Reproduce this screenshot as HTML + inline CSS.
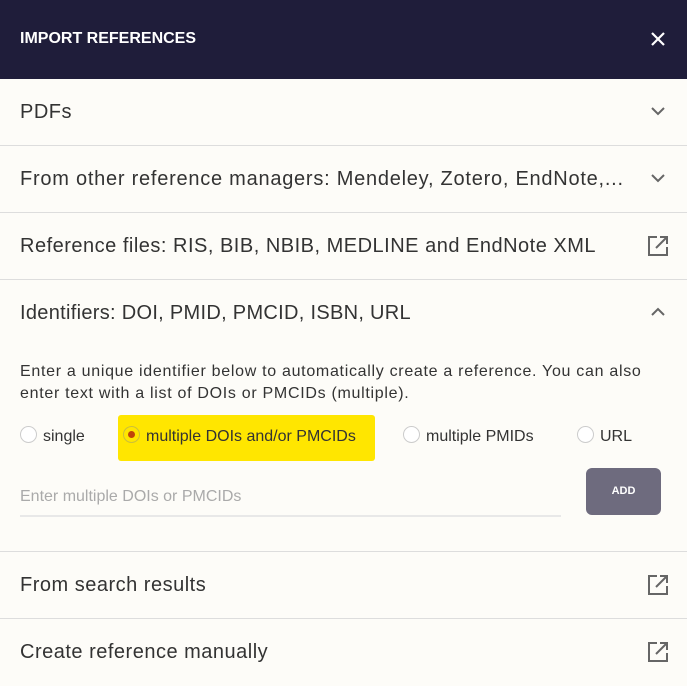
<!DOCTYPE html>
<html><head><style>
*{margin:0;padding:0;box-sizing:border-box}
body{width:687px;height:676px;overflow:hidden;background:#fdfcf8;font-family:"Liberation Sans",sans-serif;color:#333}
.hd{height:79px;background:#1f1d3a;color:#fff;font-weight:bold;font-size:16px;position:relative}
.hd span{position:absolute;left:20px;top:30px}
.row{height:67px;border-bottom:1px solid #ddd;position:relative;font-size:20px}
.row .t{position:absolute;left:20px;top:22px;white-space:nowrap;letter-spacing:0.5px}
.row svg{position:absolute;right:22px;top:27px}
.radio{display:inline-block;width:17px;height:17px;border:1px solid #ccc;border-radius:50%;background:#fff;vertical-align:middle;margin-right:6px;position:relative;top:-2px}
</style></head><body>
<div class="hd"><span>IMPORT REFERENCES</span>
<svg style="position:absolute;left:651px;top:32px" width="14" height="14" viewBox="0 0 14 14"><path d="M1 1L13 13M13 1L1 13" stroke="#fff" stroke-width="2.2"/></svg></div>
<div class="row"><span class="t">PDFs</span><svg width="14" height="10" viewBox="0 0 14 10"><path d="M1 2l6 6 6-6" fill="none" stroke="#666" stroke-width="2"/></svg></div>
<div class="row"><span class="t" style="letter-spacing:0.75px">From other reference managers: Mendeley, Zotero, EndNote,...</span><svg width="14" height="10" viewBox="0 0 14 10"><path d="M1 2l6 6 6-6" fill="none" stroke="#666" stroke-width="2"/></svg></div>
<div class="row"><span class="t">Reference files: RIS, BIB, NBIB, MEDLINE and EndNote XML</span><svg width="22" height="22" viewBox="0 0 22 22" style="right:18px;top:22px"><path d="M10 2H2v18h18v-8M13 2h7v7M20 2L9 13" fill="none" stroke="#666" stroke-width="2"/></svg></div>
<div class="row" style="height:272px">
<span class="t" style="letter-spacing:0.3px">Identifiers: DOI, PMID, PMCID, ISBN, URL</span><svg width="14" height="10" viewBox="0 0 14 10"><path d="M1 8l6-6 6 6" fill="none" stroke="#666" stroke-width="2"/></svg>
<div style="position:absolute;left:20px;top:81px;font-size:16px;line-height:22px;color:#333;width:660px;letter-spacing:0.7px;white-space:nowrap">Enter a unique identifier below to automatically create a reference. You can also<br>enter text with a list of DOIs or PMCIDs (multiple).</div>
<div style="position:absolute;left:118px;top:135px;width:257px;height:46px;background:#ffe600;border-radius:3px"></div>
<div style="position:absolute;left:20px;top:148px;font-size:16px;white-space:nowrap">
<span style="position:absolute;left:0"><span class="radio"></span>single</span>
<span style="position:absolute;left:103px"><span class="radio" style="border-color:#cbbf3a;background:#ffe600"><span style="position:absolute;left:4px;top:4px;width:7px;height:7px;border-radius:50%;background:#c0440a"></span></span>multiple DOIs and/or PMCIDs</span>
<span style="position:absolute;left:383px"><span class="radio"></span>multiple PMIDs</span>
<span style="position:absolute;left:557px"><span class="radio"></span>URL</span>
</div>
<div style="position:absolute;left:20px;top:208px;font-size:16px;color:#aaa">Enter multiple DOIs or PMCIDs</div>
<div style="position:absolute;left:20px;top:235px;width:541px;height:2px;background:#e8e8e8"></div>
<div style="position:absolute;left:586px;top:188px;width:75px;height:47px;background:#6e6b7e;border-radius:6px;color:#fff;font-size:11px;font-weight:bold;text-align:center;line-height:47px">ADD</div>
</div>
<div class="row"><span class="t">From search results</span><svg width="22" height="22" viewBox="0 0 22 22" style="right:18px;top:22px"><path d="M10 2H2v18h18v-8M13 2h7v7M20 2L9 13" fill="none" stroke="#666" stroke-width="2"/></svg></div>
<div class="row" style="border:none"><span class="t">Create reference manually</span><svg width="22" height="22" viewBox="0 0 22 22" style="right:18px;top:22px"><path d="M10 2H2v18h18v-8M13 2h7v7M20 2L9 13" fill="none" stroke="#666" stroke-width="2"/></svg></div>
</body></html>
